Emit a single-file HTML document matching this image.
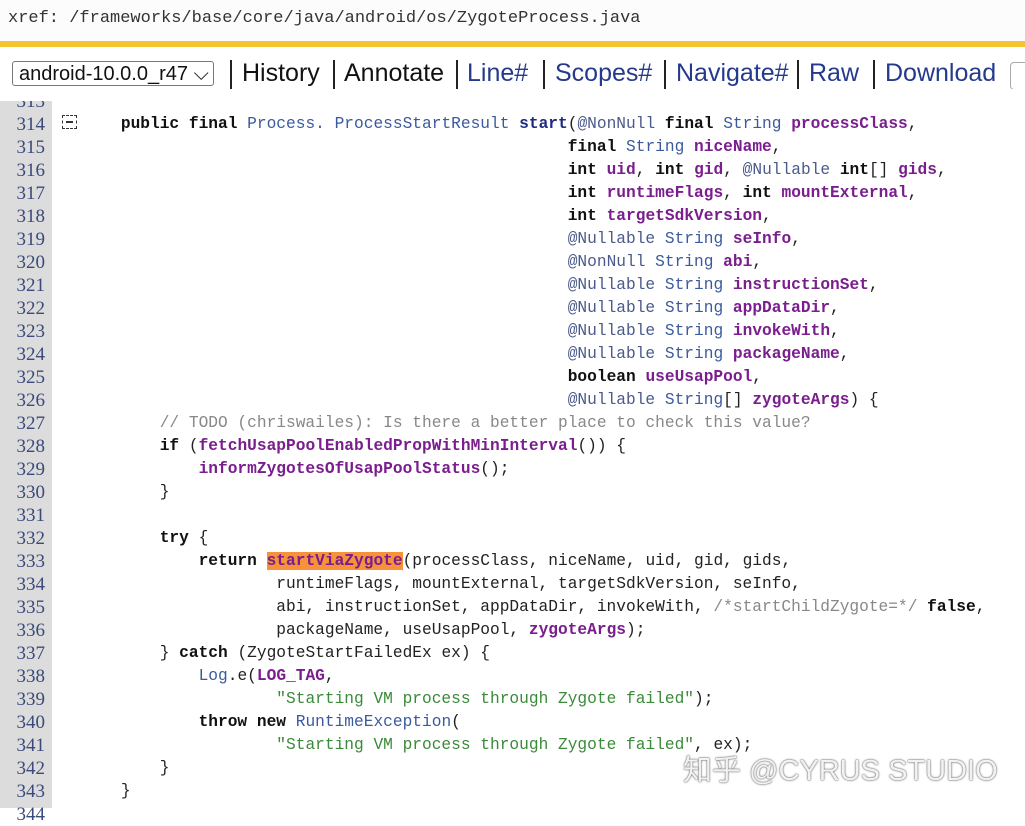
<!DOCTYPE html>
<html><head><meta charset="utf-8"><style>
body{margin:0;width:1025px;height:808px;overflow:hidden;background:#fff;position:relative;font-family:"Liberation Sans",sans-serif}
#top{position:absolute;left:0;top:0;width:1025px;height:42px;background:#fcfcfc}
#top span{position:absolute;left:8px;top:9px;font:17px "Liberation Mono",monospace;color:#333}
#yb{position:absolute;left:0;top:41px;width:1025px;height:6px;background:#f4c430}
.tb{position:absolute;top:59px;font-size:25px;color:#253a8c;white-space:nowrap}
.bl{color:#111}
.bar{position:absolute;top:60px;width:2px;height:30px;background:#222}
#sel{position:absolute;left:12px;top:61px;height:25px;border:1px solid #777;border-radius:3px;font-size:20px;line-height:25px;color:#111;padding-left:6px;box-sizing:border-box;width:202px}
#gut{position:absolute;left:0;top:101px;width:52px;height:707px;background:#dcdcdc}
#code{position:absolute;left:0;top:90px;margin:0;font:16.2px/23px "Liberation Mono",monospace;color:#222;white-space:pre}
.n{display:inline-block;width:45px;text-align:right;color:#3a4a7a;margin-right:37px;font:19px/23px "Liberation Serif",serif;vertical-align:top}
.k{font-weight:bold;color:#111}.t{color:#3b5a9e}.p{color:#7a1e8e;font-weight:bold}.m{color:#1d2b82;font-weight:bold}
.c{color:#888}.s{color:#3a8a3a}.a{color:#4a5a8a}.h{background:#f7913a}
#wm{position:absolute;left:683px;top:747px;font:29px "Liberation Sans","Noto Sans CJK SC",sans-serif;color:#f2f2f2;text-shadow:0 0 2px #666,0 0 1px #555}
#ic{position:absolute;left:62px;top:115px;width:13px;height:12px;border:1px dashed #333}
#ic:after{content:"";position:absolute;left:3px;top:5px;width:7px;height:1.5px;background:#333}
</style></head><body>
<div id="top"><span>xref: /frameworks/base/core/java/android/os/ZygoteProcess.java</span></div>
<div id="yb"></div>
<div id="sel">android-10.0.0_r47 ⌵</div>
<div class="bar" style="left:230px"></div><div class="tb bl" style="left:242px">History</div>
<div class="bar" style="left:333px"></div><div class="tb bl" style="left:344px">Annotate</div>
<div class="bar" style="left:456px"></div><div class="tb" style="left:467px">Line#</div>
<div class="bar" style="left:543px"></div><div class="tb" style="left:555px">Scopes#</div>
<div class="bar" style="left:664px"></div><div class="tb" style="left:676px">Navigate#</div>
<div class="bar" style="left:797px"></div><div class="tb" style="left:809px">Raw</div>
<div class="bar" style="left:873px"></div><div class="tb" style="left:885px">Download</div>
<div style="position:absolute;left:1010px;top:62px;width:30px;height:26px;border:1px solid #aaa;border-radius:4px"></div>
<div id="gut"></div>
<pre id="code"><span class="n">313</span>
<span class="n">314</span>    <span class="k">public final</span> <span class="t">Process. ProcessStartResult</span> <span class="m">start</span>(<span class="a">@NonNull</span> <span class="k">final</span> <span class="t">String</span> <span class="p">processClass</span>,
<span class="n">315</span>                                                  <span class="k">final</span> <span class="t">String</span> <span class="p">niceName</span>,
<span class="n">316</span>                                                  <span class="k">int</span> <span class="p">uid</span>, <span class="k">int</span> <span class="p">gid</span>, <span class="a">@Nullable</span> <span class="k">int</span>[] <span class="p">gids</span>,
<span class="n">317</span>                                                  <span class="k">int</span> <span class="p">runtimeFlags</span>, <span class="k">int</span> <span class="p">mountExternal</span>,
<span class="n">318</span>                                                  <span class="k">int</span> <span class="p">targetSdkVersion</span>,
<span class="n">319</span>                                                  <span class="a">@Nullable</span> <span class="t">String</span> <span class="p">seInfo</span>,
<span class="n">320</span>                                                  <span class="a">@NonNull</span> <span class="t">String</span> <span class="p">abi</span>,
<span class="n">321</span>                                                  <span class="a">@Nullable</span> <span class="t">String</span> <span class="p">instructionSet</span>,
<span class="n">322</span>                                                  <span class="a">@Nullable</span> <span class="t">String</span> <span class="p">appDataDir</span>,
<span class="n">323</span>                                                  <span class="a">@Nullable</span> <span class="t">String</span> <span class="p">invokeWith</span>,
<span class="n">324</span>                                                  <span class="a">@Nullable</span> <span class="t">String</span> <span class="p">packageName</span>,
<span class="n">325</span>                                                  <span class="k">boolean</span> <span class="p">useUsapPool</span>,
<span class="n">326</span>                                                  <span class="a">@Nullable</span> <span class="t">String</span>[] <span class="p">zygoteArgs</span>) {
<span class="n">327</span>        <span class="c">// TODO (chriswailes): Is there a better place to check this value?</span>
<span class="n">328</span>        <span class="k">if</span> (<span class="p">fetchUsapPoolEnabledPropWithMinInterval</span>()) {
<span class="n">329</span>            <span class="p">informZygotesOfUsapPoolStatus</span>();
<span class="n">330</span>        }
<span class="n">331</span>
<span class="n">332</span>        <span class="k">try</span> {
<span class="n">333</span>            <span class="k">return</span> <span class="p h">startViaZygote</span>(processClass, niceName, uid, gid, gids,
<span class="n">334</span>                    runtimeFlags, mountExternal, targetSdkVersion, seInfo,
<span class="n">335</span>                    abi, instructionSet, appDataDir, invokeWith, <span class="c">/*startChildZygote=*/</span> <span class="k">false</span>,
<span class="n">336</span>                    packageName, useUsapPool, <span class="p">zygoteArgs</span>);
<span class="n">337</span>        } <span class="k">catch</span> (ZygoteStartFailedEx ex) {
<span class="n">338</span>            <span class="t">Log</span>.e(<span class="p">LOG_TAG</span>,
<span class="n">339</span>                    <span class="s">"Starting VM process through Zygote failed"</span>);
<span class="n">340</span>            <span class="k">throw new</span> <span class="t">RuntimeException</span>(
<span class="n">341</span>                    <span class="s">"Starting VM process through Zygote failed"</span>, ex);
<span class="n">342</span>        }
<span class="n">343</span>    }
<span class="n">344</span></pre>
<div style="position:absolute;left:0;top:89px;width:1025px;height:12px;background:#fff"></div>
<div id="ic"></div>
<div id="wm">知乎 @CYRUS STUDIO</div>
</body></html>
